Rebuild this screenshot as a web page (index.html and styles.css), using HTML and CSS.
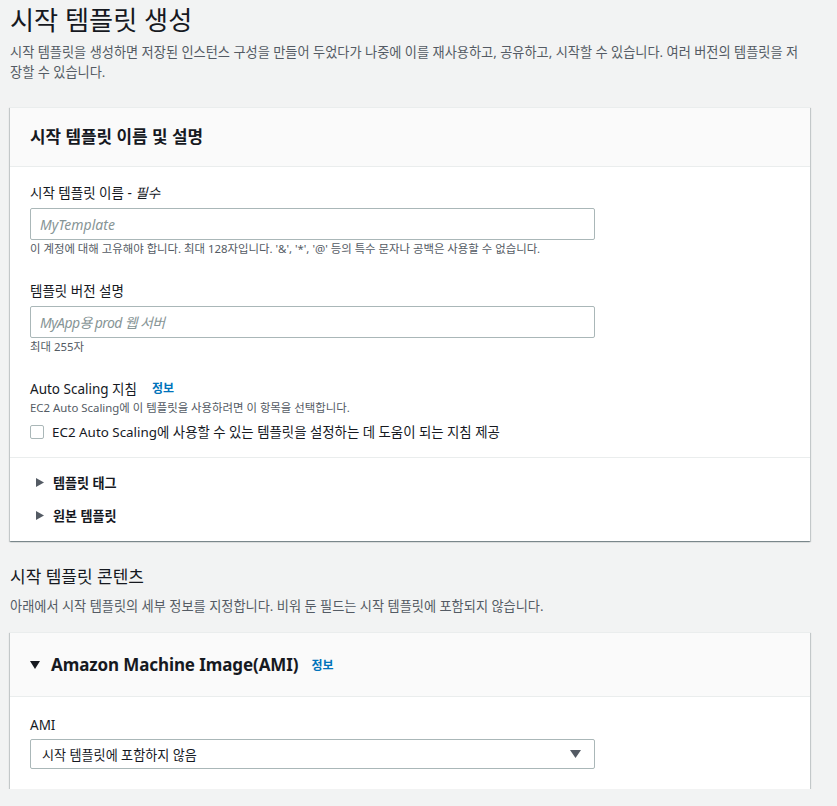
FILE: index.html
```html
<!DOCTYPE html>
<html lang="ko">
<head>
<meta charset="utf-8">
<title>시작 템플릿 생성</title>
<link rel="stylesheet" href="styles.css">
</head>
<body>
<main class="page">
  <h1 class="page-title">시작 템플릿 생성</h1>
  <p class="page-desc">시작 템플릿을 생성하면 저장된 인스턴스 구성을 만들어 두었다가 나중에 이를 재사용하고, 공유하고, 시작할 수 있습니다. 여러 버전의 템플릿을 저<br>장할 수 있습니다.</p>

  <section class="card">
    <header class="card-header">
      <h2 class="card-title">시작 템플릿 이름 및 설명</h2>
    </header>
    <div class="card-body">
      <div class="field">
        <label class="label">시작 템플릿 이름 - <em class="req">필수</em></label>
        <div class="input"><span class="placeholder">MyTemplate</span></div>
        <div class="hint">이 계정에 대해 고유해야 합니다. 최대 128자입니다. '&amp;', '*', '@' 등의 특수 문자나 공백은 사용할 수 없습니다.</div>
      </div>
      <div class="field field-2">
        <label class="label">템플릿 버전 설명</label>
        <div class="input"><span class="placeholder placeholder-tight">MyApp용 prod 웹 서버</span></div>
        <div class="hint">최대 255자</div>
      </div>
      <div class="field field-3">
        <div class="label label-row"><span>Auto Scaling 지침</span><a class="info">정보</a></div>
        <div class="hint hint-desc">EC2 Auto Scaling에 이 템플릿을 사용하려면 이 항목을 선택합니다.</div>
        <div class="check-row">
          <span class="checkbox"></span>
          <span class="check-text">EC2 Auto Scaling에 사용할 수 있는 템플릿을 설정하는 데 도움이 되는 지침 제공</span>
        </div>
      </div>
    </div>
    <div class="card-expanders">
      <div class="expander">
        <svg class="caret" width="8" height="9" viewBox="0 0 8 9"><path d="M0 0 L8 4.5 L0 9 Z" fill="#545b64"/></svg>
        <span class="exp-text">템플릿 태그</span>
      </div>
      <div class="expander">
        <svg class="caret" width="8" height="9" viewBox="0 0 8 9"><path d="M0 0 L8 4.5 L0 9 Z" fill="#545b64"/></svg>
        <span class="exp-text">원본 템플릿</span>
      </div>
    </div>
  </section>

  <h2 class="section-title">시작 템플릿 콘텐츠</h2>
  <p class="section-desc">아래에서 시작 템플릿의 세부 정보를 지정합니다. 비워 둔 필드는 시작 템플릿에 포함되지 않습니다.</p>

  <section class="card card-2">
    <header class="card-header card-header-2">
      <svg class="caret-down" width="10" height="8" viewBox="0 0 10 8"><path d="M0 0 L10 0 L5 8 Z" fill="#16191f"/></svg>
      <h2 class="card-title card-title-2">Amazon Machine Image(AMI)</h2>
      <a class="info info-2">정보</a>
    </header>
    <div class="card-body card-body-2">
      <label class="label">AMI</label>
      <div class="select">
        <span class="select-text">시작 템플릿에 포함하지 않음</span>
        <svg class="select-arrow" width="11" height="8" viewBox="0 0 11 8"><path d="M0 0 L11 0 L5.5 8 Z" fill="#545b64"/></svg>
      </div>
    </div>
  </section>
</main>
</body>
</html>
```

FILE: styles.css
```css
* { box-sizing: border-box; }

html, body {
  margin: 0;
  padding: 0;
  background: #f2f3f3;
}

body {
  font-family: "Noto Sans", "Noto Sans CJK KR", sans-serif;
  color: #16191f;
}

.page {
  width: 810px;
  padding-left: 10px;
}

.page-title {
  margin: 2px 0 0;
  font-size: 26.2px;
  line-height: 36px;
  font-weight: 400;
}

.page-desc {
  margin: 4px 0 0;
  font-size: 13.2px;
  line-height: 20px;
  color: #545b64;
}

.card {
  margin-top: 25px;
  background: #fff;
  box-shadow: 0 1px 1px 0 rgba(0, 28, 36, 0.3), 1px 1px 1px 0 rgba(0, 28, 36, 0.15), -1px 1px 1px 0 rgba(0, 28, 36, 0.15);
  border-top: 1px solid #eaeded;
}

.card-header {
  height: 59px;
  background: #fafafa;
  border-bottom: 1px solid #eaeded;
  display: flex;
  align-items: center;
  padding: 0 20px;
}

.card-title {
  margin: 0;
  font-size: 16.9px;
  line-height: 22px;
  font-weight: 700;
}

.card-body {
  padding: 16px 20px 15px;
  border-bottom: 1px solid #eaeded;
}

.field { display: flex; flex-direction: column; }
.field-2 { margin-top: 24px; }
.field-3 { margin-top: 24px; }

.label {
  font-size: 13.5px;
  line-height: 20px;
  color: #16191f;
}

.req { font-style: italic; }

.label-row { display: flex; align-items: center; }

.info {
  margin-left: 15px;
  font-size: 12px;
  font-weight: 700;
  color: #0073bb;
}

.input {
  margin-top: 5px;
  width: 565px;
  height: 32px;
  border: 1px solid #aab7b8;
  border-radius: 2px;
  background: #fff;
  display: flex;
  align-items: center;
  padding: 0 9px;
}

.placeholder {
  font-size: 14px;
  font-style: italic;
  color: #879596;
}

.placeholder-tight { letter-spacing: -0.6px; }

.hint {
  margin-top: 1px;
  font-size: 11.4px;
  line-height: 16px;
  color: #545b64;
}

.hint-desc { margin-top: 1px; }

.check-row {
  margin-top: 6px;
  display: flex;
  align-items: center;
  height: 20px;
}

.checkbox {
  width: 14px;
  height: 14px;
  border: 1px solid #aab7b8;
  border-radius: 2px;
  background: #fff;
}

.check-text {
  margin-left: 8px;
  font-size: 13.4px;
  line-height: 20px;
}

.card-expanders {
  padding: 14px 20px 16px;
  display: flex;
  flex-direction: column;
  gap: 13px;
}

.expander {
  display: flex;
  align-items: center;
  height: 20px;
  padding-left: 6px;
  font-size: 13.1px;
  font-weight: 700;
  color: #16191f;
}

.caret { margin-right: 9px; }

.section-title {
  margin: 24px 0 0;
  font-size: 17px;
  line-height: 24px;
  font-weight: 400;
}

.section-desc {
  margin: 8px 0 0;
  font-size: 13.2px;
  line-height: 18px;
  color: #545b64;
}

.card-2 { margin-top: 17px; }

.card-header-2 { height: 64px; }

.caret-down { margin-right: 11px; }

.card-title-2 {
  font-size: 17px;
  line-height: 24px;
  letter-spacing: -0.1px;
}

.info-2 { margin-left: 13px; }

.card-body-2 {
  padding: 18px 20px 20px;
  border-bottom: none;
  display: flex;
  flex-direction: column;
}

.select {
  margin-top: 4px;
  width: 565px;
  height: 30px;
  border: 1px solid #aab7b8;
  border-radius: 2px;
  background: #fff;
  display: flex;
  align-items: center;
  justify-content: space-between;
  padding: 0 13px 0 11px;
}

.select-text {
  font-size: 13.1px;
  color: #16191f;
}
```
